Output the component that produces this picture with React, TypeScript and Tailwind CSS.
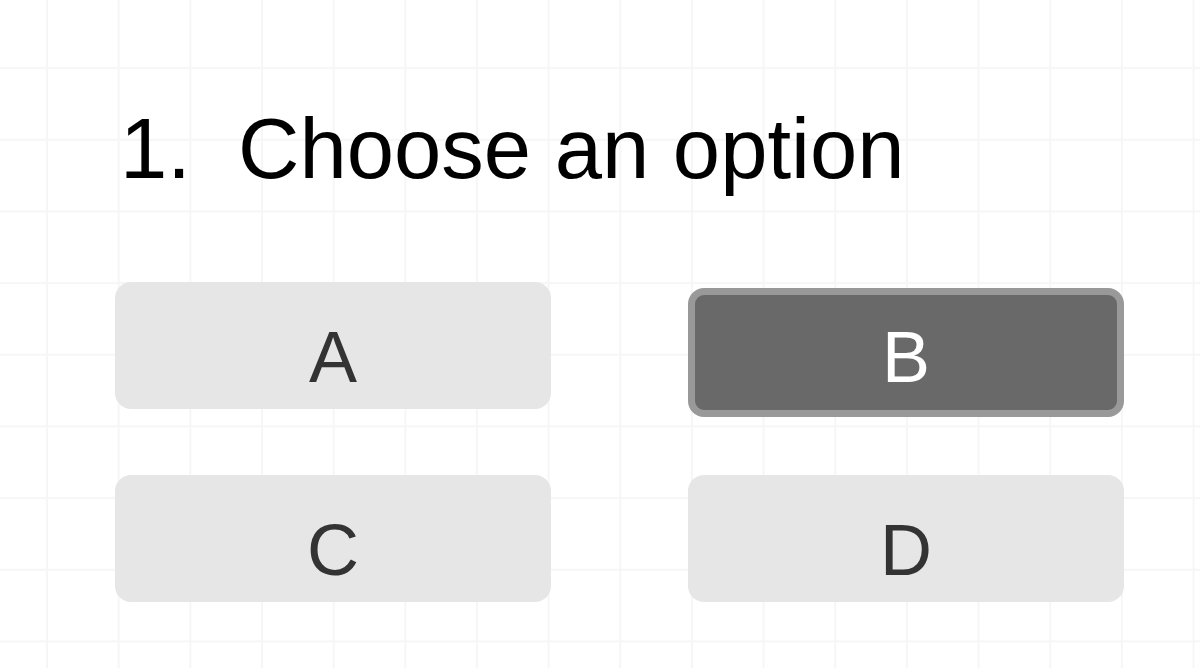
import React from "react";

type Option = {
  label: string;
  selected?: boolean;
};

const options: Option[] = [
  { label: "A" },
  { label: "B", selected: true },
  { label: "C" },
  { label: "D" },
];

const OptionButton: React.FC<Option> = ({ label, selected }) => {
  if (selected) {
    return (
      <button className="h-[129px] w-full translate-y-[6px] rounded-[16px] border-[7px] border-[#999999] bg-[#696969] pt-[8px] text-[72px] leading-none text-white">
        {label}
      </button>
    );
  }
  return (
    <button className="h-[127px] w-full self-start rounded-[16px] bg-[#e6e6e6] pt-[22px] text-[72px] leading-none text-[#333333]">
      {label}
    </button>
  );
};

const App: React.FC = () => {
  return (
    <div className="h-[668px] w-[1200px] overflow-hidden bg-white bg-[linear-gradient(to_right,#f6f6f6_2px,transparent_2px),linear-gradient(to_bottom,#f6f6f6_2px,transparent_2px)] bg-[size:71.67px_71.67px] bg-[position:46px_-4.5px] font-['Liberation_Sans',Arial,sans-serif]">
      <div className="flex flex-col pl-[115px] pt-[106px]">
        <h1 className="whitespace-pre pl-[5px] text-[85px] leading-none text-black">
          {"1.  Choose an option"}
        </h1>
        <div className="mt-[91px] grid w-[1009px] grid-cols-2 gap-x-[137px] gap-y-[64px]">
          {options.map((o) => (
            <OptionButton key={o.label} {...o} />
          ))}
        </div>
      </div>
    </div>
  );
};

export default App;
